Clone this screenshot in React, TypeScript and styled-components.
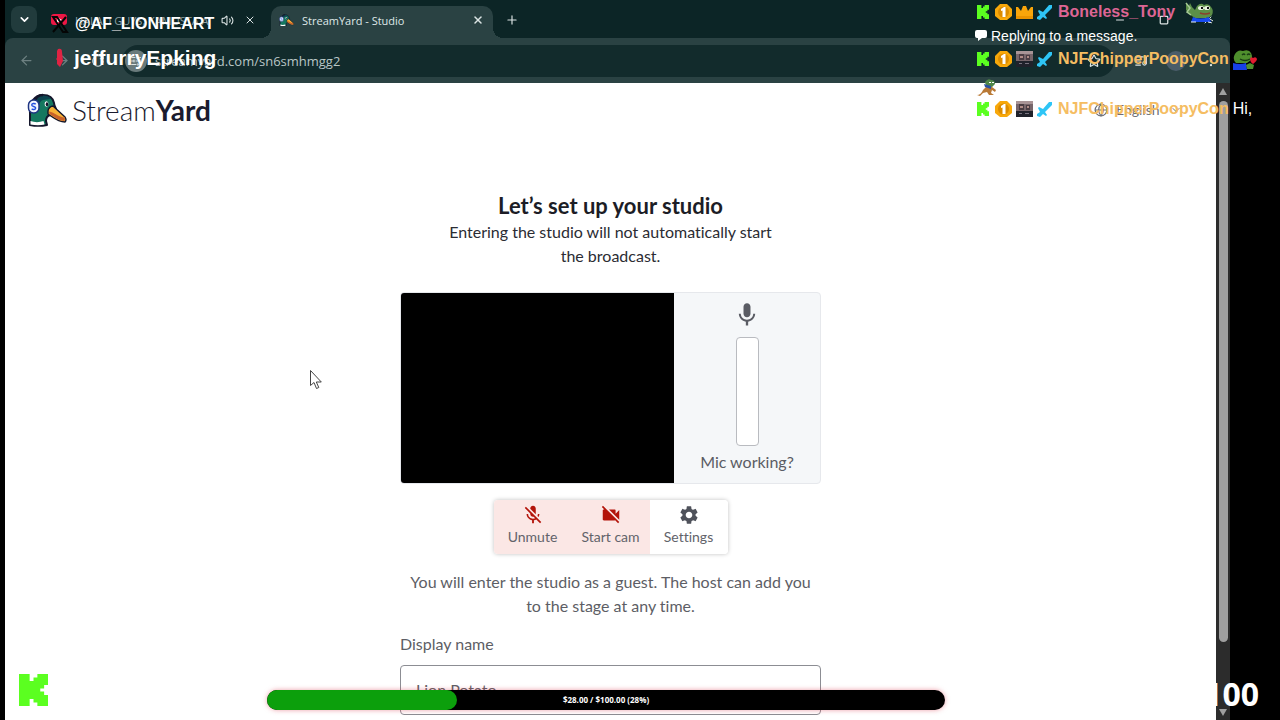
import React from "react";
import styled, { createGlobalStyle } from "styled-components";
import {
  ArrowLeft,
  ArrowRight,
  ChevronDown,
  EllipsisVertical,
  Globe,
  Minus,
  Plus,
  RotateCw,
  SlidersHorizontal,
  Square,
  Star,
  ListMusic,
  Volume2,
  X,
} from "lucide-react";
import { MdMic, MdMicOff, MdSettings, MdVideocamOff } from "react-icons/md";

const GlobalStyle = createGlobalStyle`
  * { box-sizing: border-box; }
  body { margin: 0; background: #000; }
  button, input, select { font: inherit; color: inherit; }
  button { border: 0; background: none; padding: 0; cursor: pointer; }
`;

const uiFont = `"Open Sans", "Noto Sans", sans-serif`;
const siteFont = `Lato, "Open Sans", sans-serif`;
const chatFont = `"Liberation Sans", Arial, sans-serif`;

const Screen = styled.div`
  position: relative;
  height: 100vh;
  padding: 0 50px 0 5px;
  background: #000;
  overflow: hidden;
`;

const BrowserWindow = styled.div`
  display: flex;
  flex-direction: column;
  height: 100%;
  background: #0c2526;
`;

/* ---------- tab strip ---------- */

const TabStrip = styled.div`
  display: flex;
  align-items: flex-start;
  height: 38px;
  padding: 6px 10px 0 6px;
  font-family: ${uiFont};
  font-size: 11px;
  color: #dfe8e8;
`;

const TabSearch = styled.button`
  display: grid;
  place-items: center;
  width: 26px;
  height: 27px;
  border-radius: 8px;
  background: #213b3c;
  color: #fff;
`;

const Tab = styled.div<{ $active?: boolean }>`
  position: relative;
  display: flex;
  align-items: center;
  gap: ${(p) => (p.$active ? 8 : 7)}px;
  width: ${(p) => (p.$active ? 222 : 220)}px;
  height: 32px;
  margin-left: ${(p) => (p.$active ? 0 : 14)}px;
  padding: 0 ${(p) => (p.$active ? 9 : 15)}px 4px ${(p) => (p.$active ? 8 : 0)}px;
  border-radius: 10px 10px 0 0;
  background: ${(p) => (p.$active ? "#2a4243" : "transparent")};
  white-space: nowrap;

  &::before,
  &::after {
    content: "";
    display: ${(p) => (p.$active ? "block" : "none")};
    position: absolute;
    bottom: 0;
    width: 10px;
    height: 10px;
  }
  &::before {
    left: -10px;
    background: radial-gradient(circle at 0 0, transparent 10px, #2a4243 10px);
  }
  &::after {
    right: -10px;
    background: radial-gradient(circle at 100% 0, transparent 10px, #2a4243 10px);
  }
`;

const TabTitle = styled.span<{ $dim?: boolean }>`
  flex: 1;
  overflow: hidden;
  color: ${(p) => (p.$dim ? "#8fa1a2" : "#dfe8e8")};
`;

const IconButton = styled.button<{ $dim?: boolean }>`
  display: grid;
  place-items: center;
  color: ${(p) => (p.$dim ? "#6d8081" : "#dbe4e4")};
`;

const TabButtons = styled.div`
  display: flex;
  gap: 10px;
`;

const NewTab = styled(IconButton)`
  width: 38px;
  height: 27px;
`;

const WindowControls = styled.div`
  display: flex;
  align-items: center;
  gap: 33px;
  height: 27px;
  margin-left: auto;
  padding-right: 6px;
`;

/* ---------- toolbar ---------- */

const Toolbar = styled.div`
  display: flex;
  align-items: center;
  height: 45px;
  padding: 0 12px 0 14px;
  border-radius: 8px 8px 0 0;
  background: #2a4243;
`;

const NavButtons = styled.div`
  display: flex;
  gap: 21px;
  width: 103px;
`;

const AddressBar = styled.div`
  display: flex;
  flex: 1;
  align-items: center;
  gap: 8px;
  height: 32px;
  padding: 0 13px 0 3px;
  border-radius: 16px;
  background: #122b2c;
`;

const SiteInfo = styled.button`
  display: grid;
  place-items: center;
  width: 22px;
  height: 22px;
  border-radius: 50%;
  background: #6a7b7c;
  color: #dbe4e4;
`;

const AddressInput = styled.input`
  flex: 1;
  min-width: 0;
  padding: 0;
  border: 0;
  outline: 0;
  background: none;
  font-family: ${uiFont};
  font-size: 13px;
  color: #b9c6c6;
`;

const ToolbarEnd = styled.div`
  display: flex;
  align-items: center;
  gap: 18px;
  padding-left: 20px;
`;

const Avatar = styled.button`
  width: 20px;
  height: 20px;
  border-radius: 50%;
  background: #4a5d6a;
`;

/* ---------- page ---------- */

const Viewport = styled.div`
  display: flex;
  flex: 1;
  min-height: 0;
`;

const Page = styled.main`
  flex: 1;
  min-width: 0;
  overflow: hidden;
  background: #fff;
  font-family: ${siteFont};
  font-size: 16px;
  line-height: 24px;
  font-variant-ligatures: none;
  color: #2b2c33;
`;

const Scrollbar = styled.div`
  display: flex;
  flex-direction: column;
  align-items: center;
  justify-content: space-between;
  width: 14px;
  padding: 5px 0 4px;
  background: #2c2c2c;
`;

const ScrollThumb = styled.div`
  width: 9px;
  height: 541px;
  margin-bottom: auto;
  margin-top: 6px;
  border-radius: 5px;
  background: #9f9f9f;
`;

const SiteHeader = styled.header`
  display: flex;
  align-items: center;
  justify-content: space-between;
  height: 54px;
  padding: 0 34px 0 22px;
`;

const Brand = styled.a`
  display: flex;
  align-items: center;
  gap: 5px;
  font-size: 28px;
  font-weight: 300;
  line-height: 34px;
  color: #1a1b2e;
  text-decoration: none;

  b { font-weight: 700; }
`;

const Language = styled.label`
  display: flex;
  align-items: center;
  gap: 8px;
  font-size: 14px;
  color: #6e6f76;

  select {
    appearance: none;
    width: 46px;
    padding: 0;
    border: 0;
    background: none;
  }
`;

const Setup = styled.section`
  display: flex;
  flex-direction: column;
  align-items: center;
  width: 421px;
  margin: 0 auto;
  padding-top: 55px;
  text-align: center;
`;

const Title = styled.h1`
  margin: 0;
  font-size: 22px;
  line-height: 28px;
  font-weight: 700;
  color: #1c1d26;
`;

const Lead = styled.p`
  max-width: 340px;
  margin: 0;
`;

const Preview = styled.div`
  display: flex;
  width: 100%;
  height: 192px;
  margin-top: 24px;
  border: 1px solid #e6e8ec;
  border-radius: 4px;
  overflow: hidden;
  background: #f5f7f9;
`;

const Camera = styled.div`
  flex: 1;
  background: #000;
`;

const MicPanel = styled.div`
  display: flex;
  flex-direction: column;
  align-items: center;
  width: 146px;
  padding-top: 8px;
  color: #5a5c64;
`;

const Meter = styled.div`
  width: 23px;
  height: 109px;
  margin: 8px 0 4px;
  border: 1px solid #b9bbc0;
  border-radius: 4px;
  background: #fff;
`;

const Controls = styled.div`
  display: flex;
  margin-top: 16px;
  border-radius: 4px;
  overflow: hidden;
  box-shadow: 0 0 4px rgba(0, 0, 0, 0.25);
`;

const ControlButton = styled.button<{ $off?: boolean }>`
  display: flex;
  flex-direction: column;
  align-items: center;
  width: 78px;
  height: 54px;
  padding-top: 4px;
  font-size: 14px;
  line-height: 22px;
  color: #62636a;
  background: ${(p) => (p.$off ? "#fbe7e5" : "#fff")};

  svg { color: ${(p) => (p.$off ? "#b3140a" : "#4f525b")}; }
`;

const Note = styled.p`
  margin: 16px 0 14px;
  padding: 0 8px;
  color: #5d5e65;
`;

const Field = styled.label`
  display: flex;
  flex-direction: column;
  gap: 9px;
  width: 100%;
  text-align: left;
  color: #5d5e65;

  input {
    height: 50px;
    padding: 0 15px 2px;
    border: 1px solid #8c8d93;
    border-radius: 4px;
    background: #fff;
    outline: 0;
  }
`;

/* ---------- stream overlays ---------- */

const Handles = styled.div`
  position: absolute;
  top: 12px;
  left: 48px;
  font-family: ${chatFont};
  font-weight: 700;
  color: #fff;
  text-shadow: 0 0 1px rgba(0, 0, 0, 0.4);
`;

const Handle = styled.div<{ $size: number }>`
  display: flex;
  align-items: center;
  gap: 5px;
  height: 24px;
  margin-bottom: 10px;
  font-size: ${(p) => p.$size}px;
`;

const Chat = styled.div`
  position: absolute;
  top: 0;
  left: calc(100% - 305px);
  width: 305px;
  overflow: hidden;
  font-family: ${chatFont};
  font-size: 16px;
  color: #fff;
`;

const ChatRow = styled.div<{ $height: number }>`
  display: flex;
  align-items: center;
  gap: 4px;
  height: ${(p) => p.$height}px;
  white-space: nowrap;

  svg { flex: none; }
`;

const ReplyRow = styled(ChatRow)`
  font-size: 14px;
`;

const EmoteRow = styled(ChatRow)`
  align-items: flex-end;
  padding-left: 1px;
`;

const SupporterRow = styled(ChatRow)`
  padding-left: 2px;
`;

const Platform = styled.span`
  display: flex;
  margin-right: 2px;
`;

const ChatName = styled.b<{ $color: string }>`
  margin-left: 2px;
  color: ${(p) => p.$color};
`;

const CornerLogo = styled.div`
  position: absolute;
  left: 19px;
  bottom: 14px;
  line-height: 0;
`;

const Goal = styled.div`
  position: absolute;
  left: 267px;
  right: 335px;
  bottom: 10px;
  height: 20px;
  border-radius: 10px;
  background: #000;
  box-shadow: 0 0 5px rgba(220, 60, 80, 0.5);
  font: 700 8px/20px "Open Sans", sans-serif;
  color: #fff;
  text-align: center;
`;

const GoalFill = styled.div`
  height: 20px;
  border-radius: 10px;
  background: #0c9f0c;
`;

const GoalText = styled.div`
  position: absolute;
  inset: 0;
`;

const Counter = styled.div`
  position: absolute;
  right: 21px;
  bottom: 6px;
  font: 700 32px/40px "Open Sans", sans-serif;
  color: #fff;
`;

const Pointer = styled.svg`
  position: absolute;
  left: 309px;
  top: 369px;
`;

/* ---------- drawings ---------- */

const Duck = ({ size }: { size: number }) => (
  <svg width={size} height={(size * 34) / 40} viewBox="0 0 40 34" aria-hidden="true">
    <path d="M3 32V20C2 9 8 2 16 2c6 0 10 3 11 8 0 2 1 4 2 6l-6 6c-3 1-4 3-4 6l1 4c-5 1-12 1-17 0z" fill="#14785f" stroke="#14162b" strokeWidth="2" strokeLinejoin="round" />
    <path d="M8 6c4-4 12-5 16 0-3 0-5 1-8 1-3 1-4 4-4 8z" fill="#0d4450" />
    <path d="M3.500 28c4 1.500 9 1.500 13 0l1 3.500c-4 1-9 1-14 0z" fill="#fff" />
    <path d="M21 18c0-3 3-5 5-5l12 11c1 2 2 3 0 5-7 0-11-4-17-8z" fill="#f7b135" stroke="#14162b" strokeWidth="1.400" strokeLinejoin="round" />
    <path d="M22 18.500c6 1 9 5.500 16 6l-.5 3.500c-6 0-10-4-15-7z" fill="#c9622a" />
    <ellipse cx="19.500" cy="11" rx="1.900" ry="2.700" fill="#fff" />
    <ellipse cx="20" cy="11.300" rx="1.300" ry="2" fill="#14162b" />
    <path d="M8 8c1-4 4-6 8-6" stroke="#14162b" strokeWidth="2.400" fill="none" />
    <rect x="1.500" y="7" width="10.500" height="13" rx="5" fill="#f4f7ff" stroke="#1f3583" strokeWidth="1.500" />
    <path d="M8.700 11.200c-1-1.200-4-1-4 .8s4 1.200 4 3-3 2-4 .8" stroke="#2450e0" strokeWidth="1.400" fill="none" />
  </svg>
);

const KickMark = ({ width, height }: { width: number; height: number }) => (
  <svg width={width} height={height} viewBox="0 0 30 32" preserveAspectRatio="none" aria-hidden="true">
    <path d="M0 0h11v7h4V3.500h4V0h11v11h-4v3.500h-4v3h4V21h4v11H19v-3.500h-4V25h-4v7H0z" fill="#5bff20" />
  </svg>
);

const RankBadge = () => (
  <svg width="17" height="18" viewBox="0 0 17 18" aria-hidden="true">
    <path d="M5 1h7l5 5v7l-5 4H5l-5-4V6z" fill="#f8a80a" />
    <circle cx="8.500" cy="9" r="5.500" fill="#dc8c00" />
    <path d="M6 6l3-2h1.500v10H7.500V7.500L6 8z" fill="#fff" />
  </svg>
);

const Crown = () => (
  <svg width="17" height="16" viewBox="0 0 17 16" aria-hidden="true">
    <path d="M0 3h2l3 4 2-5h3l2 5 3-4h2v12H0z" fill="#f9a50a" />
    <path d="M0 12h17v3H0z" fill="#ea9300" />
  </svg>
);

const Portrait = () => (
  <svg width="17" height="16" viewBox="0 0 17 16" aria-hidden="true">
    <path d="M0 0h17v16H0z" fill="#77666b" />
    <path d="M0 0h17v3H0z" fill="#a89496" />
    <path d="M3 3h5v6H3zM10 4h4v5h-4z" fill="#4a3d43" />
    <path d="M0 10h17v6H0z" fill="#20222b" />
    <path d="M4 5h3v2H4zM11 5h2v2h-2z" fill="#b08b86" />
    <path d="M3 12h3v1H3zM9 12h4v1H9z" fill="#77737f" />
  </svg>
);

const Sword = () => (
  <svg width="15" height="16" viewBox="0 0 15 16" aria-hidden="true">
    <path d="M12 1h3v3L8 11l2 3-1 1-3-2-3 3-3-1v-2l3-2-2-4 1-1 4 2z" fill="#2ec5f6" />
  </svg>
);

const SpeechBubble = () => (
  <svg width="12" height="11" viewBox="0 0 12 11" aria-hidden="true">
    <path d="M2 0h8q2 0 2 2v4q0 2-2 2H7l-4 3V8H2Q0 8 0 6V2q0-2 2-2z" fill="#fff" />
  </svg>
);

const DancingFrog = () => (
  <svg width="36" height="22" viewBox="-6 -1 36 22" aria-hidden="true">
    <path d="M1 2l3 2 1-3 2 4 3 3 2-4q4-4 7-1 5-2 7 2 3 3 1 8-2 3-7 3H10Q3 12 1 8z" fill="#5c8f48" />
    <path d="M1 1l4 5-3 4 4 3" stroke="#a5c995" strokeWidth="1.500" fill="none" />
    <path d="M8 15q7 3 16 0l2 5H6z" fill="#174bf0" />
    <path d="M6 20h5M23 20l4 1M25 17l3 2" stroke="#e7eef2" strokeWidth="1" />
    <ellipse cx="16" cy="6" rx="3" ry="2" fill="#e9f2df" />
    <ellipse cx="22" cy="6" rx="3" ry="2" fill="#e9f2df" />
    <path d="M16 5h2v2h-2zM22 5h2v2h-2z" fill="#111" />
    <path d="M15 11q5 2 10 0" stroke="#8b3f2d" strokeWidth="1.500" fill="none" />
  </svg>
);

const LoveFrog = () => (
  <svg width="24" height="22" viewBox="0 -2 24 22" aria-hidden="true">
    <path d="M2 4q3-5 8-3 6-2 8 2 2 4 0 7l-4 3H3Q-1 9 2 4z" fill="#4f8f2d" />
    <path d="M0 13q7 2 13 0l1 7H0z" fill="#1740e8" />
    <path d="M9 5q2-2 3 0M14 5q2-2 3 0M7 9q5 3 10 0" stroke="#183b13" strokeWidth="1.300" fill="none" />
    <path d="M13 15l4-2 4 2-1 4h-6z" fill="#4f8f2d" />
    <path d="M17 9q1-3 3-1 3-2 4 1 0 2-4 5-3-2-3-5z" fill="#e11b2f" />
  </svg>
);

const KangarooFrog = () => (
  <svg width="22" height="18" viewBox="0 0 22 18" aria-hidden="true">
    <path d="M1 16q4 0 6-5l4-4 5 1 4 3-1 2-3-2-1 3 3 2h-5l-2-3-4 1-3 3z" fill="#b97935" />
    <path d="M9 3q3-4 6-2 4 0 4 4l-3 3-6-1z" fill="#4f8648" />
    <path d="M8 5l7 2v3l-6-2z" fill="#2951a4" />
    <path d="M13 3h2v1h-2zM16 3h2v1h-2z" fill="#fff" />
  </svg>
);

const VideoFavicon = () => (
  <svg width="17" height="16" viewBox="0 0 17 16" aria-hidden="true">
    <rect x="0" y="2" width="16" height="11" rx="3" fill="#ee1745" />
    <path d="M6 5l5 3-5 3z" fill="#fff" />
  </svg>
);

const CrossMark = () => (
  <svg width="22" height="20" viewBox="0 0 22 20" aria-hidden="true">
    <path d="M5 3h4l10 15h-4z" fill="none" stroke="#050505" strokeWidth="2" />
    <path d="M18 3L5 18" stroke="#050505" strokeWidth="2" />
  </svg>
);

const RedFeather = () => (
  <svg width="21" height="20" viewBox="0 0 21 20" aria-hidden="true">
    <path d="M10 1q4-1 4 3l1 9-3 6-3-3V12l-1-1 1-1V3z" fill="#e02343" />
  </svg>
);

const Supporter = ({ badge, color, name }: { badge: React.ReactNode; color: string; name: string }) => (
  <>
    <Platform>
      <KickMark width={12} height={14} />
    </Platform>
    <RankBadge />
    {badge}
    <Sword />
    <ChatName $color={color}>{name}</ChatName>
  </>
);

const raised = 28;
const goalTotal = 100;

export default function App() {
  return (
    <Screen>
      <GlobalStyle />
      <BrowserWindow>
        <TabStrip>
          <TabSearch aria-label="Search tabs">
            <ChevronDown size={13} strokeWidth={3} />
          </TabSearch>
          <Tab>
            <VideoFavicon />
            <TabTitle $dim>HALAO GUYS, KAMUSTA A</TabTitle>
            <TabButtons>
              <IconButton aria-label="Mute tab">
                <Volume2 size={13} />
              </IconButton>
              <IconButton aria-label="Close tab">
                <X size={12} />
              </IconButton>
            </TabButtons>
          </Tab>
          <Tab $active>
            <Duck size={15} />
            <TabTitle>StreamYard - Studio</TabTitle>
            <IconButton aria-label="Close tab">
              <X size={12} strokeWidth={3} />
            </IconButton>
          </Tab>
          <NewTab aria-label="New tab">
            <Plus size={14} />
          </NewTab>
          <WindowControls>
            <IconButton aria-label="Minimize"><Minus size={12} /></IconButton>
            <IconButton aria-label="Maximize"><Square size={10} strokeWidth={3} /></IconButton>
            <IconButton aria-label="Close"><X size={12} /></IconButton>
          </WindowControls>
        </TabStrip>

        <Toolbar>
          <NavButtons>
            <IconButton $dim aria-label="Back"><ArrowLeft size={15} /></IconButton>
            <IconButton $dim aria-label="Forward"><ArrowRight size={15} /></IconButton>
            <IconButton aria-label="Reload"><RotateCw size={14} /></IconButton>
          </NavButtons>
          <AddressBar>
            <SiteInfo aria-label="Site information"><SlidersHorizontal size={12} /></SiteInfo>
            <AddressInput aria-label="Address" defaultValue="streamyard.com/sn6smhmgg2" />
            <IconButton aria-label="Bookmark"><Star size={14} /></IconButton>
          </AddressBar>
          <ToolbarEnd>
            <IconButton aria-label="Media controls"><ListMusic size={14} /></IconButton>
            <Avatar aria-label="Profile" />
            <IconButton aria-label="Menu"><EllipsisVertical size={14} /></IconButton>
          </ToolbarEnd>
        </Toolbar>

        <Viewport>
          <Page>
            <SiteHeader>
              <Brand href="#">
                <Duck size={40} />
                <span>Stream<b>Yard</b></span>
              </Brand>
              <Language>
                <Globe size={14} />
                <select aria-label="Language" defaultValue="English">
                  <option>English</option>
                </select>
                <ChevronDown size={12} />
              </Language>
            </SiteHeader>
            <Setup>
              <Title>Let’s set up your studio</Title>
              <Lead>Entering the studio will not automatically start the broadcast.</Lead>
              <Preview>
                <Camera />
                <MicPanel>
                  <MdMic size={28} />
                  <Meter />
                  <span>Mic working?</span>
                </MicPanel>
              </Preview>
              <Controls>
                <ControlButton $off><MdMicOff size={22} />Unmute</ControlButton>
                <ControlButton $off><MdVideocamOff size={22} />Start cam</ControlButton>
                <ControlButton><MdSettings size={22} />Settings</ControlButton>
              </Controls>
              <Note>You will enter the studio as a guest. The host can add you to the stage at any time.</Note>
              <Field>
                Display name
                <input defaultValue="Lion Potato" />
              </Field>
            </Setup>
          </Page>
          <Scrollbar>
            <svg width="8" height="7" viewBox="0 0 8 7"><path d="M4 0l4 7H0z" fill="#9f9f9f" /></svg>
            <ScrollThumb />
            <svg width="8" height="7" viewBox="0 0 8 7"><path d="M4 7l4-7H0z" fill="#9f9f9f" /></svg>
          </Scrollbar>
        </Viewport>
      </BrowserWindow>

      <Pointer width="14" height="22" viewBox="0 0 14 22" aria-hidden="true">
        <path d="M1.500 1.500v15l3.500-3 2.500 6 2.300-1-2.500-5.500h5z" fill="#fff" stroke="#444" strokeWidth="1" />
      </Pointer>

      <Handles>
        <Handle $size={16}><CrossMark />@AF_LIONHEART</Handle>
        <Handle $size={21}><RedFeather />jeffurryEpking</Handle>
      </Handles>

      <Chat>
        <SupporterRow $height={24}>
          <Supporter badge={<Crown />} color="#dd6594" name="Boneless_Tony" />
          <DancingFrog />
        </SupporterRow>
        <ReplyRow $height={23}><SpeechBubble />Replying to a message.</ReplyRow>
        <SupporterRow $height={24}>
          <Supporter badge={<Portrait />} color="#f5bd62" name="NJFChipperPoopyCon" />
          <LoveFrog />
        </SupporterRow>
        <EmoteRow $height={26}><KangarooFrog /></EmoteRow>
        <SupporterRow $height={24}>
          <Supporter badge={<Portrait />} color="#f5bd62" name="NJFChipperPoopyCon" />
          <span>Hi,</span>
        </SupporterRow>
      </Chat>

      <CornerLogo><KickMark width={29} height={32} /></CornerLogo>
      <Goal>
        <GoalFill style={{ width: `${(raised / goalTotal) * 100}%` }} />
        <GoalText>$28.00 / $100.00 (28%)</GoalText>
      </Goal>
      <Counter>100</Counter>
    </Screen>
  );
}
